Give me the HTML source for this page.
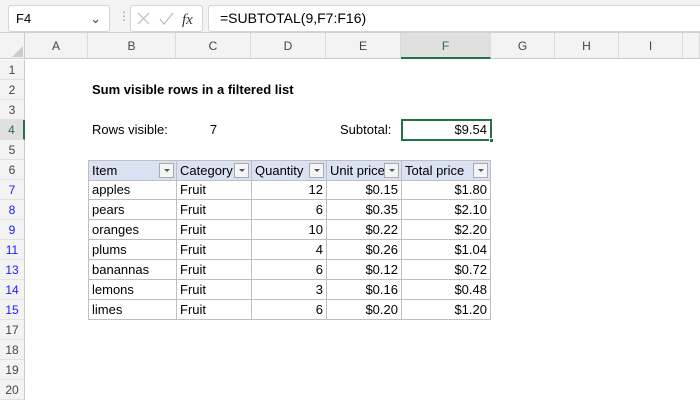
<!DOCTYPE html><html><head><style>
body{margin:0;width:700px;height:400px;overflow:hidden;background:#fff;font-family:"Liberation Sans",sans-serif;font-size:13px;color:#000;position:relative}
.a{position:absolute;box-sizing:border-box}
.rh{position:absolute;left:0;width:25px;height:20px;background:#f3f3f3;border-bottom:1px solid #e1e1e1;border-right:1px solid #ccc;text-align:center;line-height:20px;font-size:12px;color:#444;box-sizing:border-box}
.ch{position:absolute;top:33px;height:26px;background:#f3f3f3;border-right:1px solid #dadada;border-bottom:1px solid #ccc;text-align:center;line-height:26px;font-size:12px;color:#444;box-sizing:border-box}
.c{position:absolute;height:20px;line-height:20px;padding:0 3px;box-sizing:border-box;border-right:1px solid #bfbfbf;border-bottom:1px solid #bfbfbf;white-space:nowrap;overflow:hidden}
.r{text-align:right}
.dd{position:absolute;width:15px;height:15px;border:1px solid #aaa;background:#f4f4f4;box-sizing:border-box;top:2px;right:2px}
.dd:after{content:"";position:absolute;left:4px;top:5px;border-left:3px solid transparent;border-right:3px solid transparent;border-top:3px solid #555}
</style></head><body>
<div class="a" style="left:0;top:0;width:700px;height:33px;background:#f3f3f3;border-bottom:1px solid #d0d0d0"></div>
<div class="a" style="left:8px;top:5px;width:102px;height:27px;background:#fff;border:1px solid #d4d4d4;border-radius:3px;line-height:25px;padding-left:7px;font-size:13px">F4<span style="position:absolute;right:8px;top:0;color:#444">&#8964;</span></div>
<div class="a" style="left:118px;top:9px;color:#999;font-size:12px">&#8942;</div>
<div class="a" style="left:130px;top:5px;width:73px;height:27px;background:#fff;border:1px solid #d4d4d4;border-radius:3px"></div>
<svg class="a" style="left:136px;top:11px" width="64" height="16"><path d="M2 2l11 11M13 2L2 13" stroke="#bbb" stroke-width="1.2"/><path d="M24 8l4 5 9-11" stroke="#bbb" stroke-width="1.2" fill="none"/><text x="46" y="13" font-family="Liberation Serif" font-style="italic" font-size="15" fill="#333">fx</text></svg>
<div class="a" style="left:208px;top:5px;width:500px;height:27px;background:#fff;border:1px solid #d4d4d4;border-radius:3px;line-height:25px;padding-left:11px;font-size:14px">=SUBTOTAL(9,F7:F16)</div>
<div class="a" style="left:0;top:33px;width:25px;height:26px;background:#f3f3f3;border-right:1px solid #ccc;border-bottom:1px solid #ccc"></div>
<svg class="a" style="left:12px;top:46px" width="11" height="11"><path d="M11 0V11H0z" fill="#ccc"/></svg>
<div class="ch" style="left:25px;width:63px">A</div>
<div class="ch" style="left:88px;width:88px">B</div>
<div class="ch" style="left:176px;width:75px">C</div>
<div class="ch" style="left:251px;width:75px">D</div>
<div class="ch" style="left:326px;width:75px">E</div>
<div class="ch" style="left:401px;width:90px;background:#e0e0e0;border-bottom:2px solid #217346;color:#217346">F</div>
<div class="ch" style="left:491px;width:64px">G</div>
<div class="ch" style="left:555px;width:64px">H</div>
<div class="ch" style="left:619px;width:64px">I</div>
<div class="ch" style="left:683px;width:17px"></div>
<div class="rh" style="top:60px">1</div><div class="rh" style="top:80px">2</div><div class="rh" style="top:100px">3</div>
<div class="rh" style="top:120px;background:#e0e0e0;border-right:2px solid #217346;color:#217346">4</div>
<div class="rh" style="top:140px">5</div><div class="rh" style="top:160px">6</div>
<div class="rh" style="top:180px;color:#1a1aff">7</div><div class="rh" style="top:200px;color:#1a1aff">8</div><div class="rh" style="top:220px;color:#1a1aff">9</div><div class="rh" style="top:240px;color:#1a1aff">11</div><div class="rh" style="top:260px;color:#1a1aff">13</div><div class="rh" style="top:280px;color:#1a1aff">14</div><div class="rh" style="top:300px;color:#1a1aff">15</div>
<div class="rh" style="top:320px">17</div><div class="rh" style="top:340px">18</div><div class="rh" style="top:360px">19</div><div class="rh" style="top:380px">20</div>
<div class="a" style="left:92px;top:80px;line-height:20px;font-weight:bold">Sum visible rows in a filtered list</div>
<div class="a" style="left:92px;top:120px;line-height:20px">Rows visible:</div>
<div class="a" style="left:176px;top:120px;width:75px;line-height:20px;text-align:center">7</div>
<div class="a" style="left:340px;top:120px;line-height:20px">Subtotal:</div>
<div class="a" style="left:401px;top:119px;width:91px;height:22px;border:2px solid #217346;line-height:18px;text-align:right;padding-right:3px">$9.54</div>
<div class="a" style="left:489px;top:138px;width:5px;height:5px;background:#217346;border:1px solid #fff"></div>
<div class="a" style="left:88px;top:160px;width:403px;height:160px;border-left:1px solid #bfbfbf;border-top:1px solid #bfbfbf"></div>
<div style="position:absolute;left:89px;top:161px">
<div class="c" style="left:0;top:0;width:88px;background:#d9e1f2">Item<span class="dd"></span></div>
<div class="c" style="left:88px;top:0;width:75px;background:#d9e1f2">Category<span class="dd"></span></div>
<div class="c" style="left:163px;top:0;width:75px;background:#d9e1f2">Quantity<span class="dd"></span></div>
<div class="c" style="left:238px;top:0;width:75px;background:#d9e1f2">Unit price<span class="dd"></span></div>
<div class="c" style="left:313px;top:0;width:89px;background:#d9e1f2">Total price<span class="dd"></span></div>
</div>
<div style="position:absolute;left:89px;top:180px">
<div class="c" style="left:0;top:0;width:88px">apples</div><div class="c" style="left:88px;top:0;width:75px">Fruit</div><div class="c r" style="left:163px;top:0;width:75px">12</div><div class="c r" style="left:238px;top:0;width:75px">$0.15</div><div class="c r" style="left:313px;top:0;width:89px">$1.80</div>
<div class="c" style="left:0;top:20px;width:88px">pears</div><div class="c" style="left:88px;top:20px;width:75px">Fruit</div><div class="c r" style="left:163px;top:20px;width:75px">6</div><div class="c r" style="left:238px;top:20px;width:75px">$0.35</div><div class="c r" style="left:313px;top:20px;width:89px">$2.10</div>
<div class="c" style="left:0;top:40px;width:88px">oranges</div><div class="c" style="left:88px;top:40px;width:75px">Fruit</div><div class="c r" style="left:163px;top:40px;width:75px">10</div><div class="c r" style="left:238px;top:40px;width:75px">$0.22</div><div class="c r" style="left:313px;top:40px;width:89px">$2.20</div>
<div class="c" style="left:0;top:60px;width:88px">plums</div><div class="c" style="left:88px;top:60px;width:75px">Fruit</div><div class="c r" style="left:163px;top:60px;width:75px">4</div><div class="c r" style="left:238px;top:60px;width:75px">$0.26</div><div class="c r" style="left:313px;top:60px;width:89px">$1.04</div>
<div class="c" style="left:0;top:80px;width:88px">banannas</div><div class="c" style="left:88px;top:80px;width:75px">Fruit</div><div class="c r" style="left:163px;top:80px;width:75px">6</div><div class="c r" style="left:238px;top:80px;width:75px">$0.12</div><div class="c r" style="left:313px;top:80px;width:89px">$0.72</div>
<div class="c" style="left:0;top:100px;width:88px">lemons</div><div class="c" style="left:88px;top:100px;width:75px">Fruit</div><div class="c r" style="left:163px;top:100px;width:75px">3</div><div class="c r" style="left:238px;top:100px;width:75px">$0.16</div><div class="c r" style="left:313px;top:100px;width:89px">$0.48</div>
<div class="c" style="left:0;top:120px;width:88px">limes</div><div class="c" style="left:88px;top:120px;width:75px">Fruit</div><div class="c r" style="left:163px;top:120px;width:75px">6</div><div class="c r" style="left:238px;top:120px;width:75px">$0.20</div><div class="c r" style="left:313px;top:120px;width:89px">$1.20</div>
</div>
</body></html>
